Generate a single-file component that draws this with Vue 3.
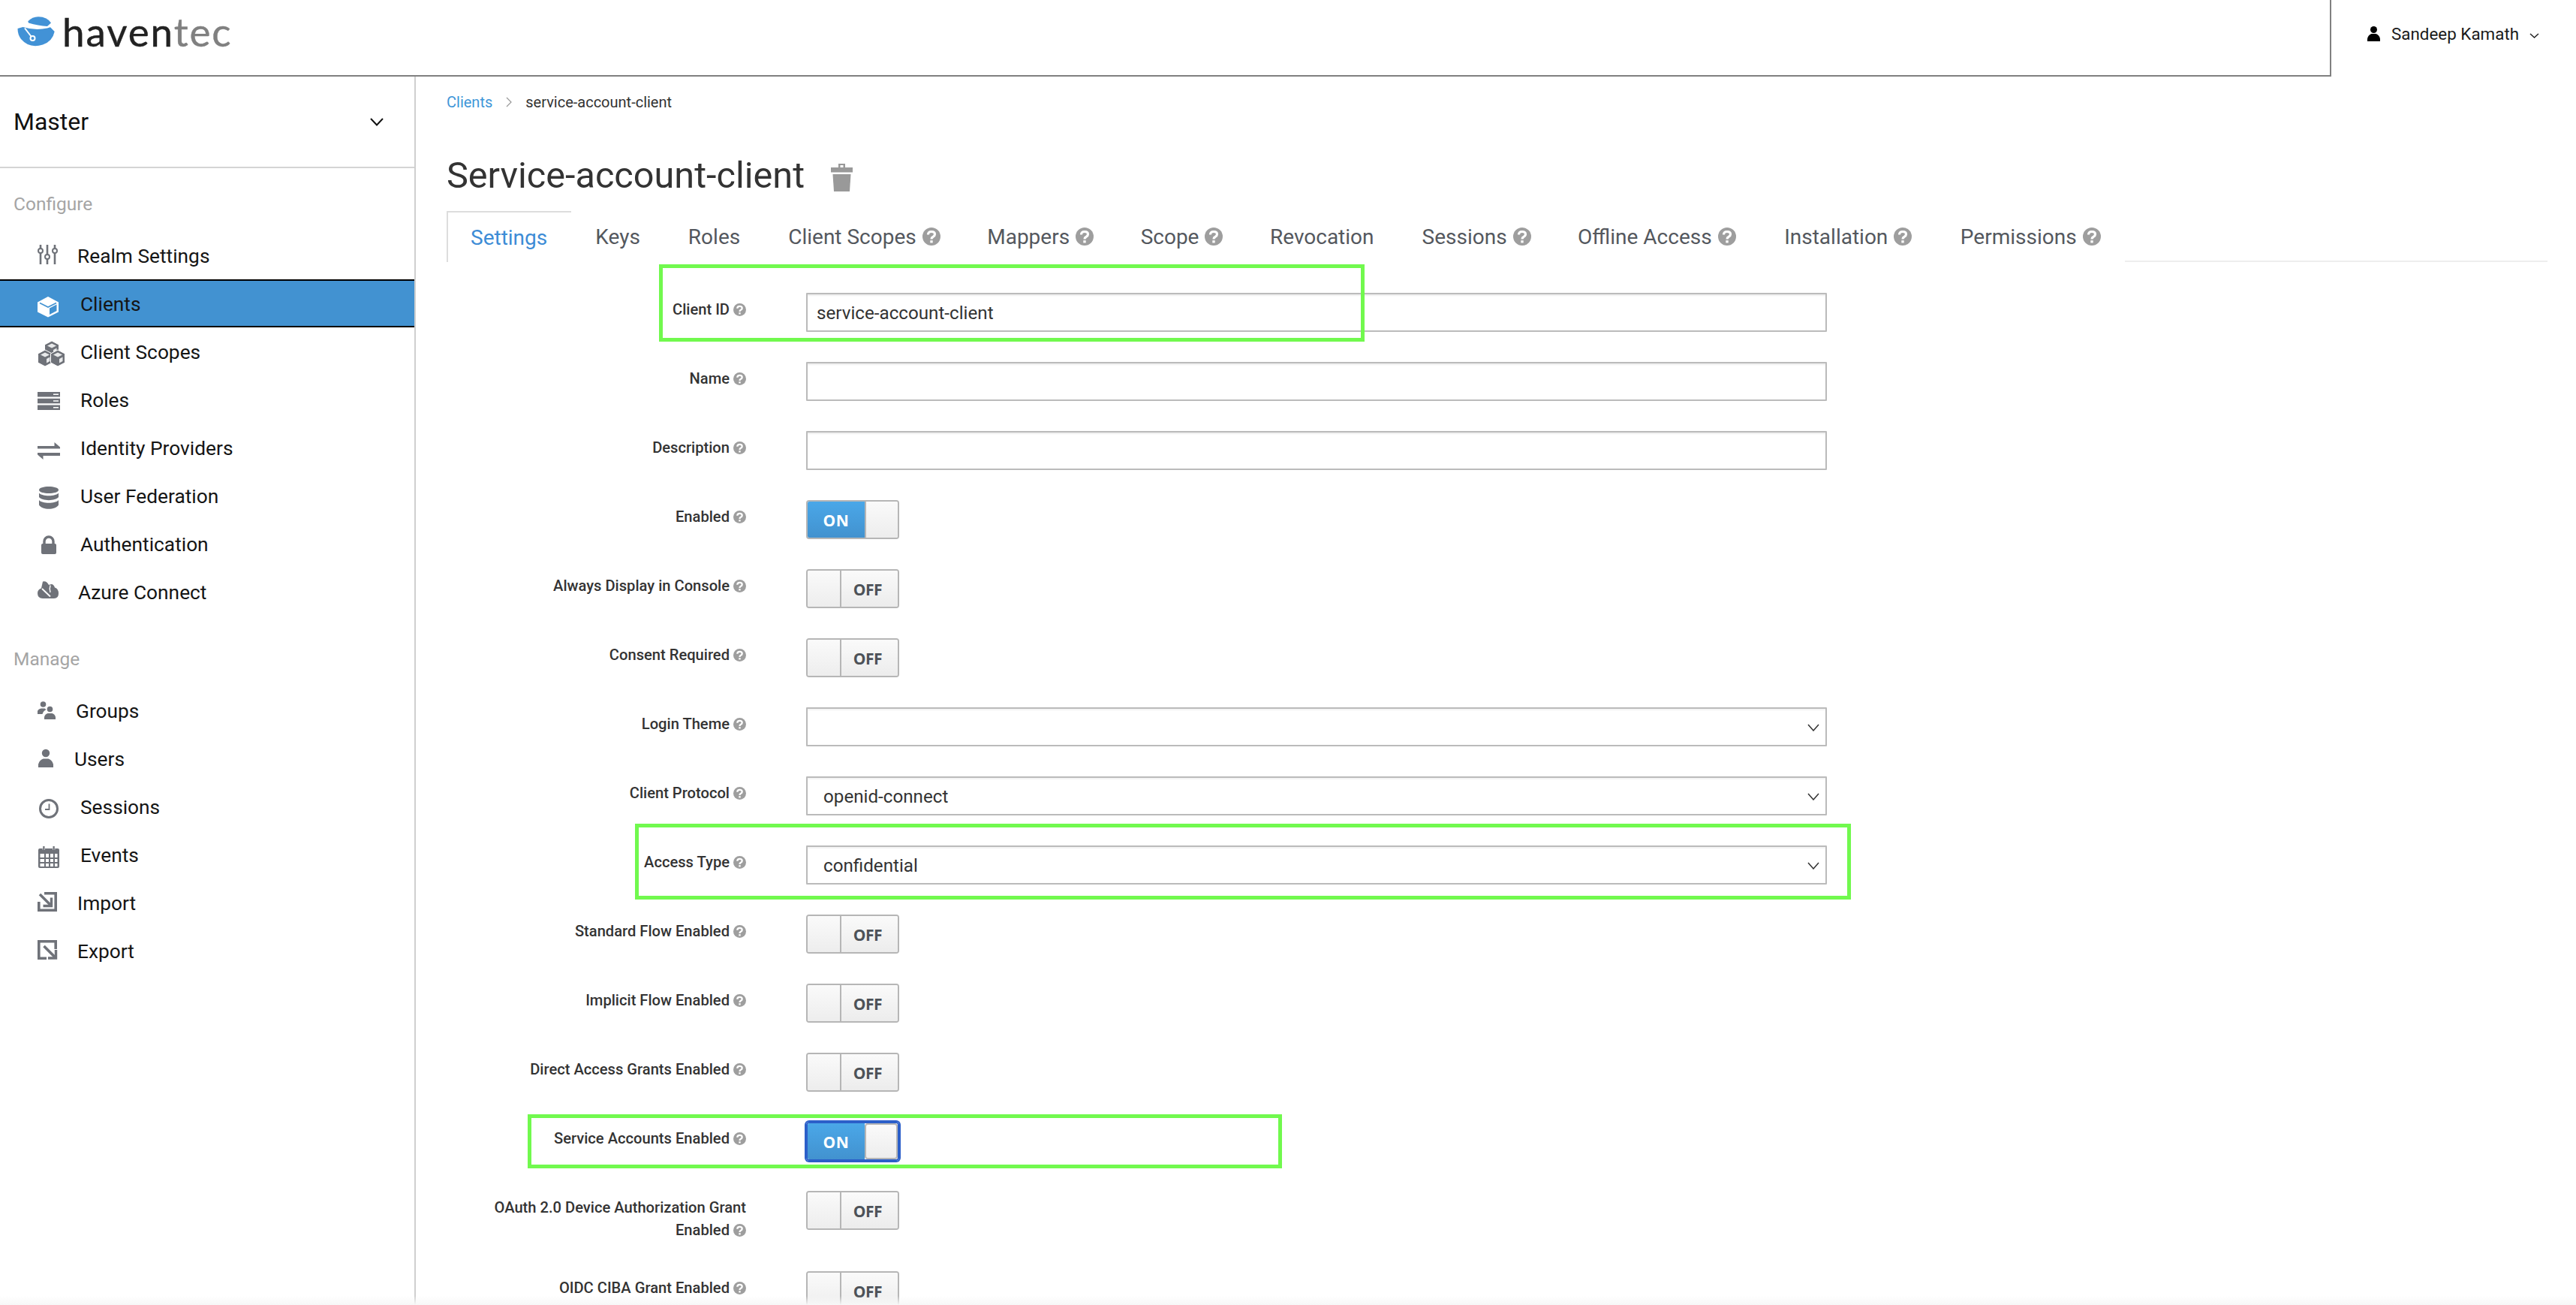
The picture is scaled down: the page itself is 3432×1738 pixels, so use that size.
<template>
  <div class="page">
    <!-- top bar -->
    <header class="topbar">
      <div class="topbar-left">
        <svg class="logo-mark" width="50" height="40" viewBox="0 0 50 40">
          <path fill="#4292d6" d="M14.3 6.3Q20 .5 28 .3Q40 .5 45 8.6L40 13Q28 12.5 15 8.6Z" />
          <path fill="#4292d6" d="M.5 16L7.5 14Q24 19 40 15.5L44 14.3L49.7 20Q47 33 34 37.5Q16 43 5 30Q.5 24 .5 16Z" />
          <path fill="none" stroke="#fff" stroke-width="2" d="M10 15.5L18.5 26.5" />
          <circle cx="20.5" cy="29" r="3" fill="none" stroke="#fff" stroke-width="2" />
        </svg>
        <span class="logo-text">haven<span class="logo-tec">tec</span></span>
      </div>
      <div class="topbar-user">
        <svg class="user-icon" width="17" height="20" viewBox="0 0 17 20">
          <circle cx="8.5" cy="4.5" r="4.5" fill="#000" />
          <path fill="#000" d="M0 20V16.5Q1 11.5 5.5 10H11.5Q16 11.5 17 16.5V20Z" />
        </svg>
        <span class="user-name">Sandeep Kamath</span>
        <svg class="user-caret" width="13" height="7" viewBox="0 0 13 7">
          <path fill="none" stroke="#222" stroke-width="1.5" d="M1 1L6.5 6L12 1" />
        </svg>
      </div>
    </header>

    <div class="body-wrap">
      <!-- left menu -->
      <aside class="sidebar">
        <div class="realm-select">
          <span>Master</span>
          <svg width="18" height="11" viewBox="0 0 18 11">
            <path fill="none" stroke="#111" stroke-width="2" d="M1 1L9 9.5L17 1" />
          </svg>
        </div>

        <div v-for="section in menu" :key="section.title" class="menu-section">
          <div class="menu-title">{{ section.title }}</div>
          <div
            v-for="item in section.items"
            :key="item.name"
            class="menu-item"
            :class="{ active: item.active }"
          >
            <svg class="menu-icon" width="40" height="40" viewBox="0 0 40 40">
              <path v-for="(p, i) in icons[item.icon]" :key="i" v-bind="p" />
            </svg>
            <span class="menu-label" :style="{ left: item.textX + 'px' }">{{ item.name }}</span>
          </div>
        </div>
      </aside>

      <main class="content">
        <div class="breadcrumb">
          <a class="crumb-link">Clients</a>
          <svg class="crumb-sep" width="8" height="14" viewBox="0 0 8 14">
            <path fill="none" stroke="#999" stroke-width="1.2" d="M1 1L7 7L1 13" />
          </svg>
          <span>service-account-client</span>
        </div>

        <h1 class="title">
          Service-account-client
          <svg class="trash" width="31" height="37" viewBox="0 0 31 37">
            <path fill="#999" d="M11 0H20V5H30V11.5H1V5H11ZM13.5 2V5H17.5V2Z" />
            <path fill="#999" d="M3.5 14H27.5L26 37H5Z" />
          </svg>
        </h1>

        <div class="tabs">
          <div
            v-for="tab in tabs"
            :key="tab.name"
            class="tab"
            :class="{ active: tab.active }"
          >
            {{ tab.name }}
            <svg v-if="tab.help" class="tab-help" width="24" height="24" viewBox="0 0 24 24">
              <circle cx="12" cy="12" r="12" fill="#9e9e9e" />
              <path fill="none" stroke="#fff" stroke-width="3.2" d="M7.5 9.5Q7.5 5.5 12 5.5Q16.5 5.5 16.5 9Q16.5 11 14 12.5Q12 13.5 12 15.5" />
              <path fill="#fff" d="M10.3 17.2H13.7V20.4H10.3Z" />
            </svg>
          </div>
          <div class="tabs-tail"></div>
        </div>

        <form class="form" @submit.prevent>
          <div v-for="row in rows" :key="row.label" class="form-row">
            <label class="form-label">
              {{ row.label }}
              <svg class="label-help" width="17" height="17" viewBox="0 0 24 24">
                <circle cx="12" cy="12" r="12" fill="#9e9e9e" />
                <path fill="none" stroke="#fff" stroke-width="3.2" d="M7.5 9.5Q7.5 5.5 12 5.5Q16.5 5.5 16.5 9Q16.5 11 14 12.5Q12 13.5 12 15.5" />
                <path fill="#fff" d="M10.3 17.2H13.7V20.4H10.3Z" />
              </svg>
            </label>

            <input v-if="row.type === 'input'" class="field" type="text" :value="row.value" />

            <div v-else-if="row.type === 'select'" class="select-wrap">
              <select class="field select">
                <option>{{ row.value }}</option>
              </select>
              <svg class="select-caret" width="16" height="10" viewBox="0 0 16 10">
                <path fill="none" stroke="#333" stroke-width="1.5" d="M1 1L8 9L15 1" />
              </svg>
            </div>

            <div v-else class="toggle" :class="{ on: row.on, focused: row.focused }">
              <template v-if="row.on">
                <span class="toggle-on">ON</span>
                <span class="toggle-handle"></span>
              </template>
              <template v-else>
                <span class="toggle-handle"></span>
                <span class="toggle-off">OFF</span>
              </template>
            </div>

            <!-- green annotation boxes from the screenshot -->
            <div v-if="row.mark" class="mark" :class="row.mark"></div>
          </div>
        </form>
      </main>
    </div>
    <div class="page-fade"></div>
  </div>
</template>

<script setup>
const G = '#6f7279'

function circle(cx, cy, r) {
  return `M${cx - r} ${cy}a${r} ${r} 0 1 0 ${r * 2} 0a${r} ${r} 0 1 0 ${-r * 2} 0Z`
}

function cube(cx, cy) {
  const hex = `M${cx} ${cy - 11}L${cx + 9.5} ${cy - 6}V${cy + 6}L${cx} ${cy + 11}L${cx - 9.5} ${cy + 6}V${cy - 6}Z`
  return [
    { d: hex, fill: G, stroke: '#fff', 'stroke-width': 1 },
    { d: `M${cx} ${cy - 7.5}L${cx + 6} ${cy - 4.5}L${cx} ${cy - 1.5}L${cx - 6} ${cy - 4.5}Z`, fill: '#e8e9ea' },
    { d: `M${cx + 2} ${cy + 1}L${cx + 6.5} ${cy - 1.5}V${cy + 4}L${cx + 2} ${cy + 6.5}Z`, fill: '#e8e9ea' }
  ]
}

const icons = {
  realm: [
    { d: 'M4 6V32M13 6V32M23 6V32', stroke: G, 'stroke-width': 2.6, fill: 'none' },
    { d: circle(4, 14, 3), fill: '#fff', stroke: G, 'stroke-width': 2 },
    { d: circle(13, 22, 3), fill: '#fff', stroke: G, 'stroke-width': 2 },
    { d: circle(23, 14, 3), fill: '#fff', stroke: G, 'stroke-width': 2 }
  ],
  clients: [
    { d: 'M14 11L28 18.5V31.5L14 38.5L0 31.5V18.5Z', fill: '#fff' },
    { d: 'M16 26.5L25.5 21.5V30L16 35Z', fill: '#4292d1' },
    { d: 'M3 19.5L14 25L25 19.5', fill: 'none', stroke: '#4292d1', 'stroke-width': 1.6 }
  ],
  scopes: [...cube(19, 17), ...cube(10, 29), ...cube(27, 29)],
  roles: [
    { d: 'M0 10H30V16.5H0ZM0 18.7H30V25.2H0ZM0 27.4H30V33.9H0Z', fill: G },
    { d: 'M21 12.5H28V14H21ZM21 21.2H28V22.7H21ZM21 29.9H28V31.4H21Z', fill: '#fff' }
  ],
  identity: [
    { d: 'M0 18H22.5V13L30 19.5V21.5H0Z', fill: G },
    { d: 'M30 27V31H7.5V36L0 29.5V27Z', fill: G }
  ],
  database: [
    { d: 'M2 12.5C2 6.5 28 6.5 28 12.5C28 18.5 2 18.5 2 12.5Z', fill: G },
    { d: 'M2 16.5C6 21.5 24 21.5 28 16.5V22C24 27.5 6 27.5 2 22Z', fill: G },
    { d: 'M2 26C6 31 24 31 28 26V32.5C24 39.5 6 39.5 2 32.5Z', fill: G }
  ],
  lock: [
    { d: 'M5 22A2 2 0 0 1 7 20H23A2 2 0 0 1 25 22V32A2 2 0 0 1 23 34H7A2 2 0 0 1 5 32Z', fill: G },
    { d: 'M9 21V17A6 6 0 0 1 21 17V21', fill: 'none', stroke: G, 'stroke-width': 3.4 }
  ],
  azure: [
    { d: 'M7 6.5Q12 5 15 11L16.5 10.5Q21 8.5 23 14.5Q28 16 28 22.5Q28 29 22 29H7Q0 29 0 22Q0 17 5 15.5Z', fill: G },
    { d: 'M6 16L17 26.5', fill: 'none', stroke: '#fff', 'stroke-width': 1.8 },
    { d: 'M17 11.5Q15.5 16 17 21', fill: 'none', stroke: '#fff', 'stroke-width': 1.4 }
  ],
  groups: [
    { d: circle(7.5, 12, 3.8), fill: G },
    { d: 'M0 25V21Q1 18 5 17.5H9.5L11.5 19Q7.5 21 6.5 25Z', fill: G },
    { d: circle(16.5, 18.5, 3.8), fill: G },
    { d: 'M9 32V29Q10 25 13.5 24H19.5Q23 25 24 29V32Z', fill: G }
  ],
  users: [
    { d: circle(11, 13, 5.2), fill: G },
    { d: 'M1 32V28Q2 22.5 7.5 20.5H14.5Q20 22.5 21 28V32Z', fill: G }
  ],
  sessions: [
    { d: circle(15, 23, 11.5), fill: 'none', stroke: G, 'stroke-width': 3 },
    { d: 'M15.5 16.5V24H10', fill: 'none', stroke: G, 'stroke-width': 1.8 }
  ],
  events: [
    { d: 'M3 12H7V9H10V12H20V9H23V12H27A2 2 0 0 1 29 14V36A2 2 0 0 1 27 38H3A2 2 0 0 1 1 36V14A2 2 0 0 1 3 12Z', fill: G },
    { d: 'M3.5 19H9V24H3.5ZM11 19H15V24H11ZM17 19H21V24H17ZM23 19H26.5V24H23ZM3.5 26H9V30H3.5ZM11 26H15V30H11ZM17 26H21V30H17ZM23 26H26.5V30H23ZM3.5 32H9V36H3.5ZM11 32H15V36H11ZM17 32H21V36H17ZM23 32H26.5V36H23Z', fill: '#fff' },
    { d: 'M7 9V14M9.5 9V14M20.5 9V14M23 9V14', stroke: '#fff', 'stroke-width': 0.5, fill: 'none' }
  ],
  import: [
    { d: 'M1.8 19V30.2H24.2V7.8H9', fill: 'none', stroke: G, 'stroke-width': 3.6 },
    { d: 'M3 9L17 23', fill: 'none', stroke: G, 'stroke-width': 3.6 },
    { d: 'M18.5 13.5V24.5H7.5', fill: 'none', stroke: G, 'stroke-width': 3.4 }
  ],
  export: [
    { d: 'M12 30.2H1.8V7.8H24.2V18', fill: 'none', stroke: G, 'stroke-width': 3.6 },
    { d: 'M8.5 14L23 28.5', fill: 'none', stroke: G, 'stroke-width': 3.6 },
    { d: 'M24.5 19V30H14', fill: 'none', stroke: G, 'stroke-width': 3.4 }
  ]
}

const menu = [
  {
    title: 'Configure',
    items: [
      { name: 'Realm Settings', icon: 'realm', textX: 103 },
      { name: 'Clients', icon: 'clients', textX: 107, active: true },
      { name: 'Client Scopes', icon: 'scopes', textX: 107 },
      { name: 'Roles', icon: 'roles', textX: 107 },
      { name: 'Identity Providers', icon: 'identity', textX: 107 },
      { name: 'User Federation', icon: 'database', textX: 107 },
      { name: 'Authentication', icon: 'lock', textX: 107 },
      { name: 'Azure Connect', icon: 'azure', textX: 104 }
    ]
  },
  {
    title: 'Manage',
    items: [
      { name: 'Groups', icon: 'groups', textX: 101 },
      { name: 'Users', icon: 'users', textX: 99 },
      { name: 'Sessions', icon: 'sessions', textX: 107 },
      { name: 'Events', icon: 'events', textX: 107 },
      { name: 'Import', icon: 'import', textX: 103 },
      { name: 'Export', icon: 'export', textX: 103 }
    ]
  }
]

const tabs = [
  { name: 'Settings', active: true },
  { name: 'Keys' },
  { name: 'Roles' },
  { name: 'Client Scopes', help: true },
  { name: 'Mappers', help: true },
  { name: 'Scope', help: true },
  { name: 'Revocation' },
  { name: 'Sessions', help: true },
  { name: 'Offline Access', help: true },
  { name: 'Installation', help: true },
  { name: 'Permissions', help: true }
]

const rows = [
  { label: 'Client ID', type: 'input', value: 'service-account-client', mark: 'mark-client' },
  { label: 'Name', type: 'input', value: '' },
  { label: 'Description', type: 'input', value: '' },
  { label: 'Enabled', type: 'toggle', on: true },
  { label: 'Always Display in Console', type: 'toggle' },
  { label: 'Consent Required', type: 'toggle' },
  { label: 'Login Theme', type: 'select', value: '' },
  { label: 'Client Protocol', type: 'select', value: 'openid-connect' },
  { label: 'Access Type', type: 'select', value: 'confidential', mark: 'mark-access' },
  { label: 'Standard Flow Enabled', type: 'toggle' },
  { label: 'Implicit Flow Enabled', type: 'toggle' },
  { label: 'Direct Access Grants Enabled', type: 'toggle' },
  { label: 'Service Accounts Enabled', type: 'toggle', on: true, focused: true, mark: 'mark-service' },
  { label: 'OAuth 2.0 Device Authorization Grant Enabled', type: 'toggle' },
  { label: 'OIDC CIBA Grant Enabled', type: 'toggle' }
]
</script>

<style>
html,
body {
  margin: 0;
  background: #fff;
}
</style>

<style scoped>
.page {
  position: relative;
  width: 3432px;
  height: 1738px;
  overflow: hidden;
  background: #fff;
  font-family: Roboto, "Liberation Sans", sans-serif;
  color: #333;
}

/* top bar */
.topbar {
  display: flex;
  height: 102px;
}

.topbar-left {
  box-sizing: border-box;
  width: 3106px;
  display: flex;
  align-items: center;
  padding-left: 23px;
  border-right: 2px solid #808080;
  border-bottom: 2px solid #808080;
}

.logo-mark {
  margin-top: -16px;
}

.logo-text {
  margin: -16px 0 0 10px;
  font-family: Lato, sans-serif;
  font-size: 53px;
  line-height: 60px;
  letter-spacing: 1.9px;
  color: #222;
  -webkit-text-stroke: 0.4px currentColor;
}

.logo-tec {
  color: #808080;
}

.topbar-user {
  flex: 1;
  display: flex;
  align-items: center;
  padding: 0 0 12px 48px;
  font-size: 22.4px;
  color: #1a1a1a;
}

.user-name {
  margin-left: 15px;
}

.user-caret {
  margin: 4px 0 0 14px;
}

.body-wrap {
  display: flex;
  height: 1636px;
}

/* sidebar */
.sidebar {
  flex: 0 0 552px;
  border-right: 2px solid #cfcfcf;
}

.realm-select {
  display: flex;
  align-items: center;
  justify-content: space-between;
  height: 120px;
  padding: 0 41px 0 18px;
  border-bottom: 2px solid #d4d4d4;
  font-size: 32px;
  color: #111;
}

.menu-title {
  box-sizing: border-box;
  height: 84px;
  padding: 34px 0 0 18px;
  font-size: 24.5px;
  line-height: 28px;
  color: #a5a5a5;
}

.menu-section + .menu-section {
  margin-top: 10px;
}

.menu-item {
  position: relative;
  box-sizing: border-box;
  height: 64px;
  display: flex;
  align-items: center;
  padding-left: 50px;
  font-size: 26.3px;
  color: #151515;
}

.menu-item.active {
  background: #4292d1;
  border-top: 2px solid #000;
  border-bottom: 2px solid #000;
}

.menu-label {
  position: absolute;
  top: 50%;
  transform: translateY(calc(-50% + 1px));
}

/* content */
.content {
  flex: 1;
  min-width: 0;
  padding: 20px 38px 0 41px;
}

.breadcrumb {
  display: flex;
  align-items: center;
  height: 28px;
  font-size: 20px;
  color: #333;
}

.crumb-link {
  color: #3f96d8;
}

.crumb-sep {
  margin: 0 18px 0 18px;
}

.title {
  display: flex;
  align-items: center;
  margin: 56px 0 19px;
  font-size: 48.6px;
  line-height: 56px;
  font-weight: 400;
}

.trash {
  margin: 4px 0 0 34px;
}

.tabs {
  display: flex;
  height: 68px;
}

.tab {
  display: flex;
  align-items: center;
  padding: 0 32px;
  font-size: 28px;
  color: #54585e;
  white-space: nowrap;
}

.tab.active {
  padding-left: 30px;
  border-left: 2px solid #ddd;
  border-top: 2px solid #ddd;
  color: #3d8cd6;
}

.tab-help {
  margin: 0 -1.5px 0 8px;
}

.tab:nth-child(n + 9) .tab-help {
  margin-right: 0.5px;
}

.tabs-tail {
  flex: 1;
  border-bottom: 2px solid #eee;
}

/* form */
.form {
  margin-top: 41px;
}

.form-row {
  position: relative;
  display: flex;
  align-items: flex-start;
  margin-bottom: 40px;
}

.form-label {
  box-sizing: border-box;
  flex: 0 0 350px;
  margin: 0 80px 0 49px;
  padding-top: 7px;
  text-align: right;
  font-size: 20.15px;
  line-height: 30px;
  font-weight: 500;
  color: #333;
}

.label-help {
  vertical-align: -2px;
}

.field {
  box-sizing: border-box;
  width: 1360px;
  height: 52px;
  padding: 1px 12px 0;
  border: 2px solid #bbb;
  border-radius: 1px;
  box-shadow: inset 0 2px 2px rgba(0, 0, 0, 0.07);
  background: #fff;
  font-family: inherit;
  font-size: 24.2px;
  color: #333;
  outline: none;
}

.select-wrap {
  position: relative;
}

.select {
  display: block;
  padding: 2px 12px 0 21px;
  appearance: none;
  box-shadow: inset 0 2px 2px rgba(0, 0, 0, 0.05);
}

.select-caret {
  position: absolute;
  top: 22px;
  right: 10px;
}

.toggle {
  box-sizing: border-box;
  display: flex;
  width: 124px;
  height: 52px;
  border: 2px solid #b6b6b6;
  border-radius: 4px;
  overflow: hidden;
  font-family: "Open Sans", sans-serif;
  font-size: 21px;
  font-weight: 700;
  letter-spacing: 0.5px;
}

.toggle.focused {
  box-shadow: 0 0 0 2px #2b5fc9;
  border-color: #2b5fc9;
}

.toggle-on {
  flex: 0 0 76px;
  display: flex;
  align-items: center;
  justify-content: center;
  padding-top: 2px;
  background: linear-gradient(#4aa7e8, #4292cf);
  color: #fff;
}

.toggle-off {
  flex: 1;
  display: flex;
  align-items: center;
  justify-content: center;
  padding: 2px 5px 0 0;
  background: linear-gradient(#fafafa, #ececec);
  color: #4d5258;
  letter-spacing: -0.5px;
}

.toggle-handle {
  box-sizing: border-box;
  flex: 0 0 45px;
  background: linear-gradient(#fafafa, #ededed);
  border-right: 2px solid #b6b6b6;
}

.toggle.on .toggle-handle {
  flex: 1;
  border-right: 0;
  border-left: 2px solid #b6b6b6;
}

.toggle.focused .toggle-handle {
  border: 2px solid #b6b6b6;
  border-radius: 4px;
}

/* green boxes */
.mark {
  position: absolute;
  box-sizing: border-box;
  border: 5px solid #71f94e;
  pointer-events: none;
}

.mark-client {
  top: -38px;
  left: 283px;
  width: 940px;
  height: 103px;
}

.mark-access {
  top: -29px;
  left: 251px;
  width: 1620px;
  height: 101px;
}

.mark-service {
  top: -10px;
  left: 108px;
  width: 1005px;
  height: 72px;
}

.page-fade {
  position: absolute;
  left: 0;
  right: 0;
  bottom: 0;
  height: 12px;
  background: linear-gradient(rgba(248, 248, 248, 0), #f7f7f7);
}
</style>
